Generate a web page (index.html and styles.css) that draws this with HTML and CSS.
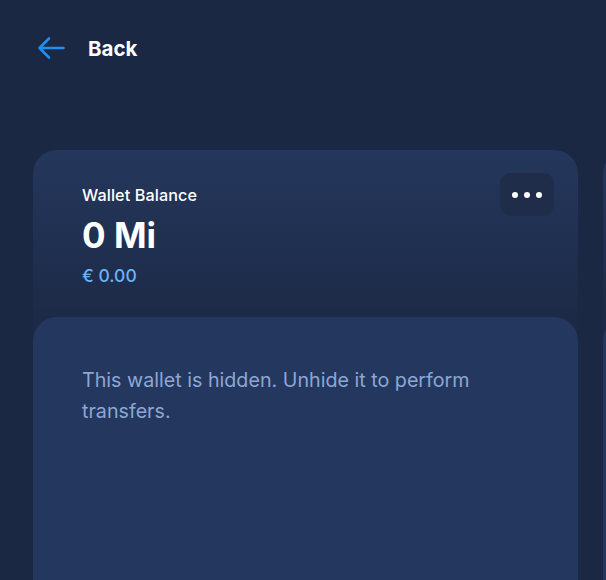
FILE: index.html
```html
<!DOCTYPE html>
<html lang="en">
<head>
<meta charset="utf-8">
<title>Wallet</title>
<link rel="stylesheet" href="styles.css">
</head>
<body>
<div class="page">
  <header class="topbar">
    <button class="back" type="button">
      <svg class="back-icon" viewBox="0 0 28 24" width="28" height="24" aria-hidden="true">
        <path d="M26.5 12H2.5M12 2.5 2.5 12l9.5 9.5" fill="none" stroke="#1f8ef1" stroke-width="2.6" stroke-linecap="round" stroke-linejoin="round"/>
      </svg>
      <span class="back-label">Back</span>
    </button>
  </header>

  <div class="carousel">
    <section class="card">
      <div class="card-head">
        <div class="balance">
          <div class="balance-label">Wallet Balance</div>
          <div class="balance-value">0 Mi</div>
          <div class="balance-fiat">€ 0.00</div>
        </div>
        <button class="more" type="button" aria-label="More">
          <span class="dot"></span><span class="dot"></span><span class="dot"></span>
        </button>
      </div>
      <div class="panel">
        <p class="hidden-note">This wallet is hidden. Unhide it to perform transfers.</p>
      </div>
    </section>
    <section class="card">
      <div class="card-head"></div>
      <div class="panel"></div>
    </section>
  </div>
</div>
</body>
</html>
```
FILE: styles.css
```css
* { box-sizing: border-box; }
html, body {
  margin: 0;
  padding: 0;
  background: #1b2843;
  height: 100%;
  overflow: hidden;
}
body {
  font-family: Inter, "Noto Sans", sans-serif;
  color: #ffffff;
}
.page {
  padding: 34px 0 0 33px;
}
.topbar {
  height: 28px;
  display: flex;
  align-items: center;
}
.back {
  display: flex;
  align-items: center;
  gap: 23px;
  background: none;
  border: 0;
  padding: 0 0 0 4px;
  color: #fff;
  font: inherit;
  cursor: pointer;
}
.back-icon { display: block; }
.back-label {
  font-size: 20.5px;
  font-weight: 700;
  line-height: 24px;
  padding-top: 2px;
}
.carousel {
  margin-top: 88px;
  display: flex;
  gap: 25px;
}
.card {
  flex: 0 0 545px;
  height: 470px;
  border-radius: 24px;
  background: linear-gradient(180deg, #24375c 0px, #1d2a47 167px, #1d2a47 100%);
  display: flex;
  flex-direction: column;
}
.card-head {
  height: 167px;
  flex: 0 0 167px;
  padding: 23px 24px 0 49px;
  display: flex;
  justify-content: space-between;
  align-items: flex-start;
}
.balance-label {
  font-size: 16.2px;
  font-weight: 500;
  line-height: 20px;
  margin-top: 12px;
  letter-spacing: 0.1px;
}
.balance-value {
  font-size: 35px;
  font-weight: 700;
  line-height: 44px;
  margin-top: 8px;
}
.balance-fiat {
  font-size: 17.5px;
  font-weight: 500;
  line-height: 22px;
  color: #6cb2f6;
  margin-top: 8px;
}
.more {
  width: 54px;
  height: 43px;
  border: 0;
  border-radius: 11px;
  background: #1f2d4b;
  display: flex;
  align-items: center;
  justify-content: center;
  gap: 6px;
  padding: 0;
  cursor: pointer;
}
.dot {
  width: 6px;
  height: 6px;
  border-radius: 50%;
  background: #fff;
}
.panel {
  flex: 1;
  background: #24375e;
  border-radius: 24px 24px 0 0;
  padding: 48px 49px 0 49px;
}
.hidden-note {
  margin: 0;
  font-size: 19.7px;
  line-height: 31px;
  color: #8ca7d4;
  max-width: 420px;
}
```
